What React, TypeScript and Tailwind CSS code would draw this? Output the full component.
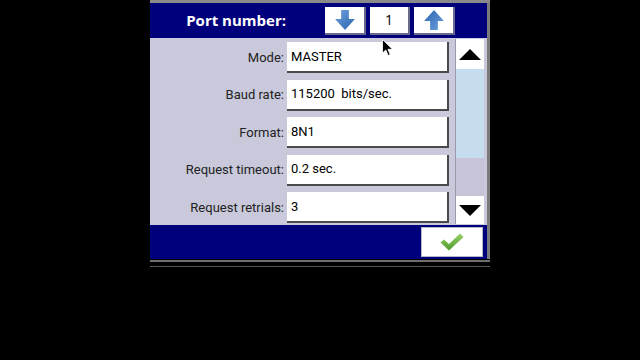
import React from "react";

const font = { fontFamily: '"Open Sans", "DejaVu Sans", sans-serif' };
const textFont = { fontFamily: 'Roboto, "Open Sans", sans-serif' };

const rows = [
  { label: "Mode:", value: "MASTER" },
  { label: "Baud rate:", value: "115200  bits/sec." },
  { label: "Format:", value: "8N1" },
  { label: "Request timeout:", value: "0.2 sec." },
  { label: "Request retrials:", value: "3" },
];

const BlockArrow = ({ up }: { up?: boolean }) => (
  <svg width="22" height="22" viewBox="0 0 20 20" className={up ? "rotate-180" : ""}>
    <defs>
      <linearGradient id={up ? "gu" : "gd"} x1="0" y1="0" x2="1" y2="1">
        <stop offset="0" stopColor="#6ea3e0" />
        <stop offset="1" stopColor="#2a62ad" />
      </linearGradient>
    </defs>
    <polygon
      points="6.5,1 13.5,1 13.5,9 19,9 10,19 1,9 6.5,9"
      fill={`url(#${up ? "gu" : "gd"})`}
    />
  </svg>
);

const Field = ({ value }: { value: string }) => (
  <div className="w-[162px] h-[31px] bg-white border-r-2 border-b-2 border-[#4a4a4a] flex items-center pl-[4px] text-[13px] text-black whitespace-pre">
    {value}
  </div>
);

export default function App() {
  return (
    <div className="w-[640px] h-[360px] bg-black pl-[150px] relative" style={font}>
      <div className="w-[340px] flex flex-col">
        {/* top border */}
        <div className="h-[3px] bg-[#8a8a8a]" />
        <div className="flex border-r-[3px] border-[#7a7a7a]">
          <div className="flex-1 flex flex-col">
            {/* header */}
            <div className="h-[35px] bg-[#00007c] flex items-center">
              <div className="w-[136px] text-right text-white font-bold text-[15px]">
                Port number:
              </div>
              <div className="flex gap-[4px] ml-[39px]">
                <div className="w-[41px] h-[28px] bg-white border-r-2 border-b-2 border-[#6a6a8a] flex items-center justify-center">
                  <BlockArrow />
                </div>
                <div className="w-[40px] h-[28px] bg-white border-r-2 border-b-2 border-[#6a6a8a] flex items-center justify-center text-[14px] text-black">
                  1
                </div>
                <div className="w-[41px] h-[28px] bg-white border-r-2 border-b-2 border-[#6a6a8a] flex items-center justify-center">
                  <BlockArrow up />
                </div>
              </div>
            </div>

            {/* body */}
            <div className="h-[187px] bg-[#c9c9db] flex pr-[2px]" style={textFont}>
              <div className="flex flex-col pt-[4px] gap-[6.5px]">
                {rows.map((r) => (
                  <div key={r.label} className="flex items-center">
                    <div className="w-[137px] pr-[3px] text-right text-[13px] text-[#222]">
                      {r.label}
                    </div>
                    <Field value={r.value} />
                  </div>
                ))}
              </div>
              <div className="ml-[6px] mt-[1px] w-[29px] h-[185px] flex flex-col border-l border-[#9a9aae]">
                <div className="h-[30px] bg-white flex items-center justify-center">
                  <div className="w-0 h-0 border-l-[11px] border-r-[11px] border-b-[11px] border-l-transparent border-r-transparent border-b-black" />
                </div>
                <div className="h-[89px] bg-[#c6ddf0]" />
                <div className="h-[38px] bg-[#c6c4d6]" />
                <div className="h-[28px] bg-white flex items-center justify-center">
                  <div className="w-0 h-0 border-l-[11px] border-r-[11px] border-t-[11px] border-l-transparent border-r-transparent border-t-black" />
                </div>
              </div>
            </div>

            {/* footer */}
            <div className="h-[34px] bg-[#00007c] flex items-center justify-end pr-[4px]">
              <div className="w-[62px] h-[30px] bg-white border border-[#b8b8c8] flex items-center justify-center">
                <svg width="26" height="20" viewBox="0 0 26 20">
                  <defs>
                    <linearGradient id="gc" x1="0" y1="0" x2="0" y2="1">
                      <stop offset="0" stopColor="#9ad36a" />
                      <stop offset="1" stopColor="#4e9a2c" />
                    </linearGradient>
                  </defs>
                  <path
                    d="M1.5 10.5 L5 7.5 L10 12 L21 1.5 L24.5 5 L10 18.5 Z"
                    fill="url(#gc)"
                  />
                </svg>
              </div>
            </div>
          </div>
        </div>
        {/* bottom edge lines */}
        <div className="h-[1px] bg-black" />
        <div className="h-[2px] bg-[#6e6e6e]" />
        <div className="h-[4px] bg-black" />
        <div className="h-[1px] bg-[#555]" />
      </div>

      {/* mouse cursor */}
      <svg
        className="absolute left-[382px] top-[39px]"
        width="12"
        height="18"
        viewBox="0 0 12 18"
      >
        <path
          d="M0.5 0.5 L0.5 14 L3.8 11 L6.2 16.5 L8.2 15.6 L5.9 10.3 L10.5 10.3 Z"
          fill="#000"
          stroke="#fff"
          strokeWidth="0.8"
        />
      </svg>
    </div>
  );
}
